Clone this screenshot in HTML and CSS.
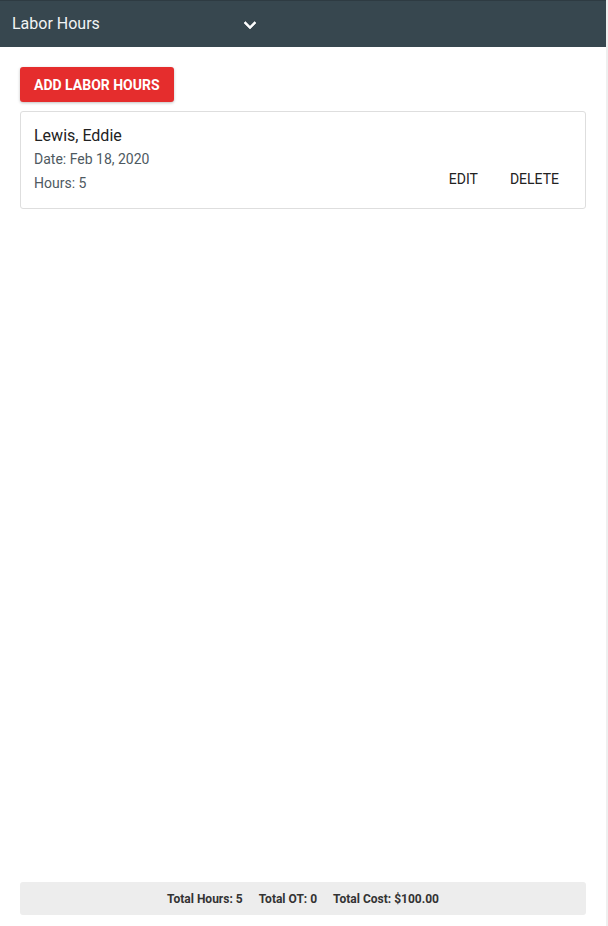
FILE: index.html
```html
<!DOCTYPE html>
<html lang="en">
<head>
<meta charset="utf-8">
<title>Labor Hours</title>
<link rel="stylesheet" href="styles.css">
</head>
<body>
<div class="page">
  <header class="topbar">
    <span class="topbar-title">Labor Hours</span>
    <svg class="chevron" width="24" height="24" viewBox="0 0 24 24" aria-hidden="true"><path d="M7.41 8.59 12 13.17l4.59-4.58L18 10l-6 6-6-6z" fill="#ffffff"/></svg>
  </header>
  <main class="content">
    <button class="btn-add">ADD LABOR HOURS</button>
    <div class="card">
      <div class="card-info">
        <div class="card-name">Lewis, Eddie</div>
        <div class="card-line">Date: Feb 18, 2020</div>
        <div class="card-line">Hours: 5</div>
      </div>
      <div class="card-actions">
        <button class="btn-text">EDIT</button>
        <button class="btn-text">DELETE</button>
      </div>
    </div>
  </main>
  <footer class="totals">
    <span>Total Hours: 5</span>
    <span>Total OT: 0</span>
    <span>Total Cost: $100.00</span>
  </footer>
</div>
</body>
</html>
```

FILE: styles.css
```css
html, body {
  margin: 0;
  padding: 0;
  background: #ffffff;
}
body {
  font-family: Roboto, "Liberation Sans", Arial, sans-serif;
  width: 608px;
}
.page {
  width: 606px;
  min-height: 926px;
  border-right: 2px solid #efefef;
  display: flex;
  flex-direction: column;
  box-sizing: content-box;
}
.topbar {
  height: 47px;
  box-sizing: border-box;
  background: #37474f;
  border-top: 1px solid #2e3b42;
  display: flex;
  align-items: center;
  padding: 0 0 2px 12px;
}
.topbar-title {
  color: #f2f4f5;
  font-size: 16px;
  width: 226px;
}
.chevron {
  width: 24px;
  height: 24px;
  margin-top: 3px;
  stroke: #ffffff;
  stroke-width: 0.6;
}
.content {
  flex: 1;
  padding: 20px 20px 0 20px;
  display: flex;
  flex-direction: column;
  align-items: flex-start;
}
.btn-add {
  height: 35px;
  padding: 0 14px;
  border: none;
  border-radius: 3px;
  background: #e52d2d;
  color: #ffffff;
  font-family: inherit;
  font-size: 14px;
  font-weight: 700;
  letter-spacing: 0;
  box-shadow: 0 1px 3px rgba(0,0,0,0.25);
  cursor: pointer;
}
.card {
  margin-top: 9px;
  width: 566px;
  height: 98px;
  box-sizing: border-box;
  border: 1px solid #dedede;
  border-radius: 3px;
  display: flex;
  justify-content: space-between;
  align-items: flex-end;
  padding: 12px 10px 12px 13px;
}
.card-info {
  align-self: flex-start;
}
.card-name {
  font-size: 16px;
  color: #222222;
  line-height: 23px;
  font-weight: 400;
}
.card-line {
  font-size: 14px;
  color: #4e5961;
  line-height: 24px;
}
.card-actions {
  display: flex;
  gap: 0;
  margin-bottom: 3px;
}
.btn-text {
  background: none;
  border: none;
  font-family: inherit;
  font-size: 14px;
  font-weight: 400;
  color: #222222;
  padding: 6px 16px;
  cursor: pointer;
}
.totals {
  margin: 0 20px 11px 20px;
  height: 33px;
  background: #ededed;
  border-radius: 3px;
  display: flex;
  justify-content: center;
  align-items: center;
  gap: 16px;
  font-size: 12px;
  font-weight: 700;
  color: #333333;
}
```
